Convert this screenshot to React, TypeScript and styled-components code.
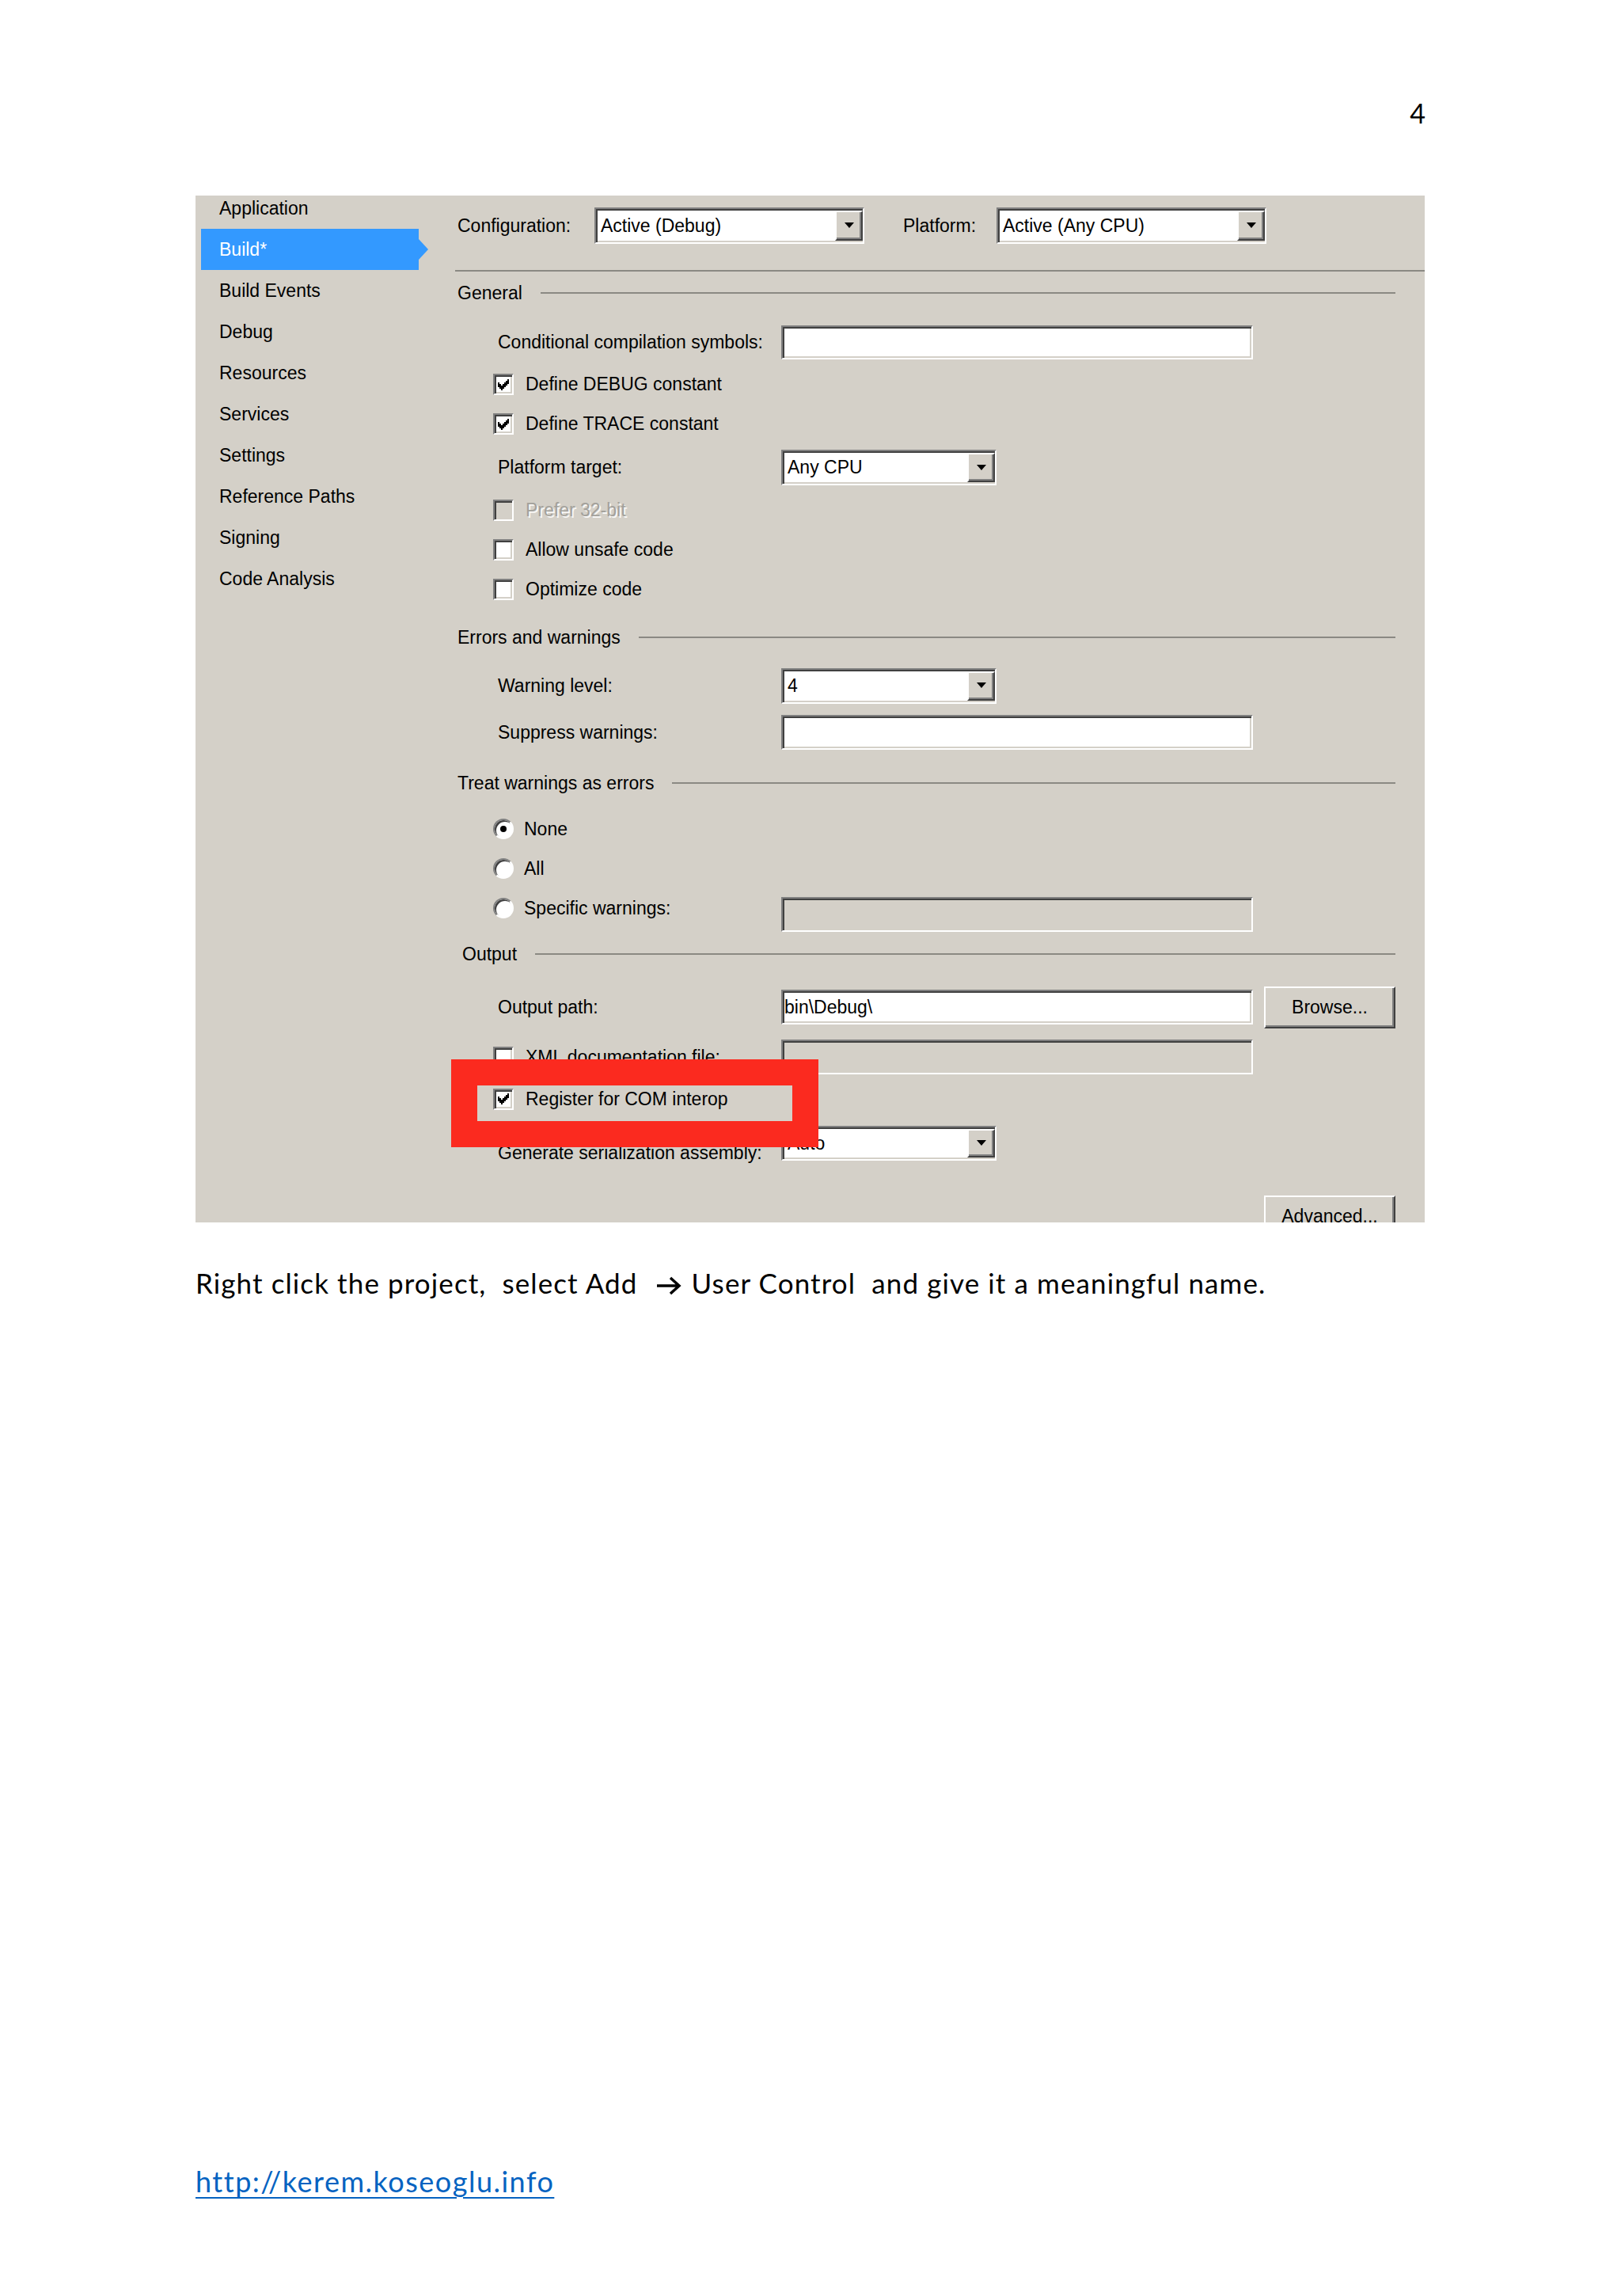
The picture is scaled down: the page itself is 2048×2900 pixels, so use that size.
import React from "react";
import styled, { createGlobalStyle, css } from "styled-components";

const panel = "#d4d0c8";
const shadow = "#808080";
const darkShadow = "#404040";
const highlight = "#ffffff";
const etched = "#8b8983";

const GlobalStyle = createGlobalStyle`
  html, body {
    margin: 0;
    padding: 0;
    background: #ffffff;
  }
  * {
    box-sizing: border-box;
  }
`;

const sunken = css`
  border: 2px solid;
  border-color: ${shadow} ${highlight} ${highlight} ${shadow};
  box-shadow: inset 2px 2px 0 ${darkShadow}, inset -2px -2px 0 ${panel};
`;

const raised = css`
  border: 2px solid;
  border-color: ${highlight} ${darkShadow} ${darkShadow} ${highlight};
  box-shadow: inset -2px -2px 0 ${shadow};
  background: ${panel};
`;

const Page = styled.div`
  width: 2048px;
  height: 2900px;
  padding: 0 247px;
  display: flex;
  flex-direction: column;
  overflow: hidden;
  font-family: Lato, "Open Sans", sans-serif;
  color: #000;
`;

const PageNumber = styled.div`
  margin-top: 126px;
  height: 34px;
  font-size: 34px;
  line-height: 34px;
  text-align: right;
`;

/* ---------- the dialog screenshot ---------- */

const Dialog = styled.div`
  position: relative;
  margin-top: 87px;
  width: 1553px;
  height: 1297px;
  flex-shrink: 0;
  display: flex;
  overflow: hidden;
  background: ${panel};
  font-family: "Liberation Sans", Arial, sans-serif;
  font-size: 23px;
  color: #000;
`;

const Sidebar = styled.nav`
  width: 294px;
  flex-shrink: 0;
  display: flex;
  flex-direction: column;
  margin-top: -10px;
`;

const NavItem = styled.div<{ $active?: boolean }>`
  position: relative;
  height: 52px;
  width: 275px;
  margin-left: 7px;
  padding-left: 23px;
  display: flex;
  align-items: center;
  white-space: nowrap;

  ${(p) =>
    p.$active &&
    css`
      background: #3399ff;
      color: #ffffff;

      &::after {
        content: "";
        position: absolute;
        top: 50%;
        right: -12px;
        margin-top: -13px;
        border-left: 12px solid #3399ff;
        border-top: 13px solid transparent;
        border-bottom: 13px solid transparent;
      }
    `}
`;

const Main = styled.div`
  flex: 1;
  min-width: 0;
  display: flex;
  flex-direction: column;
  padding: 15px 37px 0 37px;
`;

const TopRow = styled.div`
  height: 46px;
  flex-shrink: 0;
  display: flex;
  align-items: center;
`;

const Separator = styled.div`
  flex-shrink: 0;
  height: 2px;
  margin: 33px -37px 0 -3px;
  background: ${etched};
`;

const GroupHeader = styled.div<{ $h: number; $indent?: number }>`
  height: ${(p) => p.$h}px;
  flex-shrink: 0;
  display: flex;
  align-items: center;
  padding-left: ${(p) => p.$indent ?? 0}px;
  white-space: nowrap;

  &::after {
    content: "";
    flex: 1;
    height: 2px;
    margin-left: 23px;
    background: ${etched};
  }
`;

const Row = styled.div<{ $h: number; $indent: number; $end?: boolean }>`
  height: ${(p) => p.$h}px;
  flex-shrink: 0;
  display: flex;
  align-items: center;
  justify-content: ${(p) => (p.$end ? "flex-end" : "flex-start")};
  padding-left: ${(p) => p.$indent}px;
`;

const Label = styled.span<{ $w?: number; $pad?: number; $shift?: number; $disabled?: boolean }>`
  flex-shrink: 0;
  width: ${(p) => (p.$w ? `${p.$w}px` : "auto")};
  padding-left: ${(p) => p.$pad ?? 0}px;
  margin-top: ${(p) => p.$shift ?? 0}px;
  white-space: nowrap;
  color: ${(p) => (p.$disabled ? "#a3a19b" : "#000")};
  text-shadow: ${(p) => (p.$disabled ? "2px 2px 0 rgba(255,255,255,0.85)" : "none")};
`;

const Choice = styled.span<{ $w?: number; $gap: number; $shift?: number }>`
  flex-shrink: 0;
  display: flex;
  align-items: center;
  gap: ${(p) => p.$gap}px;
  width: ${(p) => (p.$w ? `${p.$w}px` : "auto")};
  margin-bottom: ${(p) => p.$shift ?? 0}px;
`;

const CheckBox = styled.span<{ $disabled?: boolean }>`
  ${sunken};
  width: 26px;
  height: 27px;
  flex-shrink: 0;
  display: flex;
  align-items: center;
  justify-content: center;
  background: ${(p) => (p.$disabled ? panel : "#fff")};
`;

const RadioCircle = styled.span`
  width: 26px;
  height: 26px;
  flex-shrink: 0;
  border-radius: 50%;
  border: 2px solid;
  border-color: ${shadow} ${highlight} ${highlight} ${shadow};
  box-shadow: inset 2px 2px 0 ${darkShadow};
  background: #fff;
  display: flex;
  align-items: center;
  justify-content: center;
`;

const RadioDot = styled.span`
  width: 8px;
  height: 8px;
  border-radius: 50%;
  background: #000;
`;

const TextBox = styled.div<{ $w: number; $h: number; $disabled?: boolean; $shift?: number }>`
  ${sunken};
  width: ${(p) => p.$w}px;
  height: ${(p) => p.$h}px;
  flex-shrink: 0;
  margin-top: ${(p) => p.$shift ?? 0}px;
  padding-left: 2px;
  display: flex;
  align-items: center;
  white-space: nowrap;
  background: ${(p) => (p.$disabled ? panel : "#fff")};
`;

const Combo = styled.div<{ $w: number; $h: number }>`
  ${sunken};
  width: ${(p) => p.$w}px;
  height: ${(p) => p.$h}px;
  flex-shrink: 0;
  display: flex;
  padding: 2px 0 2px 2px;
  background: #fff;
`;

const ComboValue = styled.span`
  flex: 1;
  display: flex;
  align-items: center;
  padding-left: 4px;
  white-space: nowrap;
  overflow: hidden;
`;

const ComboButton = styled.span`
  ${raised};
  width: 35px;
  flex-shrink: 0;
  display: flex;
  align-items: center;
  justify-content: center;
`;

const PushButton = styled.div<{ $gap?: number }>`
  ${raised};
  width: 166px;
  height: 53px;
  flex-shrink: 0;
  margin-left: ${(p) => p.$gap ?? 0}px;
  display: flex;
  align-items: center;
  justify-content: center;
  white-space: nowrap;
`;

const Highlight = styled.div`
  position: absolute;
  left: 323px;
  top: 1091px;
  width: 464px;
  height: 111px;
  border: 33px solid #fb2a1f;
  pointer-events: none;
`;

/* ---------- document text ---------- */

const BodyText = styled.p`
  margin: 56px 0 0 0;
  font-size: 35px;
  line-height: 40px;
  letter-spacing: 1.1px;
  white-space: pre;
`;

const ArrowIcon = styled.svg`
  width: 34px;
  height: 26px;
  vertical-align: -3px;
  margin: 0 2px;
`;

const FooterLink = styled.a`
  margin-top: 1095px;
  align-self: flex-start;
  font-size: 36px;
  line-height: 40px;
  letter-spacing: 1.5px;
  color: #0563c1;
  text-decoration: underline;
  text-decoration-thickness: 2px;
  text-underline-offset: 6px;
`;

/* ---------- pieces ---------- */

const CheckMark = () => (
  <svg width="14" height="14" viewBox="0 0 7 7" shapeRendering="crispEdges">
    <path
      fill="#000"
      d="M6 0h1v1h-1z M5 1h2v1h-2z M0 2h1v1h-1z M4 2h3v1h-3z M0 3h2v1h-2z M3 3h3v1h-3z M0 4h5v1h-5z M1 5h3v1h-3z M2 6h1v1h-1z"
    />
  </svg>
);

const DropArrow = () => (
  <svg width="12" height="8" viewBox="0 0 12 8">
    <polygon points="0,0 12,0 6,7" fill="#000" />
  </svg>
);

const Check = ({
  label,
  checked,
  disabled,
  width,
}: {
  label: string;
  checked?: boolean;
  disabled?: boolean;
  width?: number;
}) => (
  <Choice $gap={15} $w={width}>
    <CheckBox $disabled={disabled}>{checked && <CheckMark />}</CheckBox>
    <Label $disabled={disabled}>{label}</Label>
  </Choice>
);

const Radio = ({
  label,
  selected,
  width,
  shift,
}: {
  label: string;
  selected?: boolean;
  width?: number;
  shift?: number;
}) => (
  <Choice $gap={13} $w={width} $shift={shift}>
    <RadioCircle>{selected && <RadioDot />}</RadioCircle>
    <Label>{label}</Label>
  </Choice>
);

const DropDown = ({ value, w, h }: { value: string; w: number; h: number }) => (
  <Combo $w={w} $h={h}>
    <ComboValue>{value}</ComboValue>
    <ComboButton>
      <DropArrow />
    </ComboButton>
  </Combo>
);

const navItems = [
  "Application",
  "Build*",
  "Build Events",
  "Debug",
  "Resources",
  "Services",
  "Settings",
  "Reference Paths",
  "Signing",
  "Code Analysis",
];

export default function App() {
  return (
    <>
      <GlobalStyle />
      <Page>
        <PageNumber>4</PageNumber>

        <Dialog>
          <Sidebar>
            {navItems.map((item) => (
              <NavItem key={item} $active={item === "Build*"}>
                {item}
              </NavItem>
            ))}
          </Sidebar>

          <Main>
            <TopRow>
              <Label $w={173}>Configuration:</Label>
              <DropDown value="Active (Debug)" w={341} h={46} />
              <Label $w={167} $pad={49}>
                Platform:
              </Label>
              <DropDown value="Active (Any CPU)" w={341} h={46} />
            </TopRow>
            <Separator />

            <GroupHeader $h={54}>General</GroupHeader>
            <Row $h={70} $indent={51}>
              <Label $w={358}>Conditional compilation symbols:</Label>
              <TextBox $w={596} $h={43} />
            </Row>
            <Row $h={37} $indent={45}>
              <Check label="Define DEBUG constant" checked />
            </Row>
            <Row $h={63} $indent={45}>
              <Check label="Define TRACE constant" checked />
            </Row>
            <Row $h={47} $indent={51}>
              <Label $w={358}>Platform target:</Label>
              <DropDown value="Any CPU" w={272} h={45} />
            </Row>
            <Row $h={60} $indent={45}>
              <Check label="Prefer 32-bit" disabled />
            </Row>
            <Row $h={40} $indent={45}>
              <Check label="Allow unsafe code" />
            </Row>
            <Row $h={60} $indent={45}>
              <Check label="Optimize code" />
            </Row>

            <GroupHeader $h={62}>Errors and warnings</GroupHeader>
            <Row $h={60} $indent={51}>
              <Label $w={358}>Warning level:</Label>
              <DropDown value="4" w={272} h={45} />
            </Row>
            <Row $h={58} $indent={51}>
              <Label $w={358}>Suppress warnings:</Label>
              <TextBox $w={596} $h={44} />
            </Row>

            <GroupHeader $h={70}>Treat warnings as errors</GroupHeader>
            <Row $h={46} $indent={45}>
              <Radio label="None" selected />
            </Row>
            <Row $h={54} $indent={45}>
              <Radio label="All" />
            </Row>
            <Row $h={54} $indent={45}>
              <Radio label="Specific warnings:" width={364} shift={8} />
              <TextBox $w={596} $h={44} $disabled $shift={8} />
            </Row>

            <GroupHeader $h={54} $indent={6}>
              Output
            </GroupHeader>
            <Row $h={80} $indent={51}>
              <Label $w={358}>Output path:</Label>
              <TextBox $w={596} $h={44}>
                bin\Debug\
              </TextBox>
              <PushButton $gap={14}>Browse...</PushButton>
            </Row>
            <Row $h={46} $indent={45}>
              <Check label="XML documentation file:" width={364} />
              <TextBox $w={596} $h={44} $disabled />
            </Row>
            <Row $h={60} $indent={45}>
              <Check label="Register for COM interop" checked />
            </Row>
            <Row $h={52} $indent={51}>
              <Label $w={358} $shift={24}>
                Generate serialization assembly:
              </Label>
              <DropDown value="Auto" w={272} h={44} />
            </Row>
            <Row $h={93} $indent={0} $end>
              <PushButton style={{ alignSelf: "flex-end" }}>Advanced...</PushButton>
            </Row>
          </Main>

          <Highlight />
        </Dialog>

        <BodyText>
          {"Right click the project,  select Add  "}
          <ArrowIcon viewBox="0 0 34 26">
            <path d="M2 13 H30 M19 3 L30 13 L19 23" stroke="#000" strokeWidth="3.5" fill="none" />
          </ArrowIcon>
          {" User Control  and give it a meaningful name."}
        </BodyText>

        <FooterLink href="http://kerem.koseoglu.info">http://kerem.koseoglu.info</FooterLink>
      </Page>
    </>
  );
}
